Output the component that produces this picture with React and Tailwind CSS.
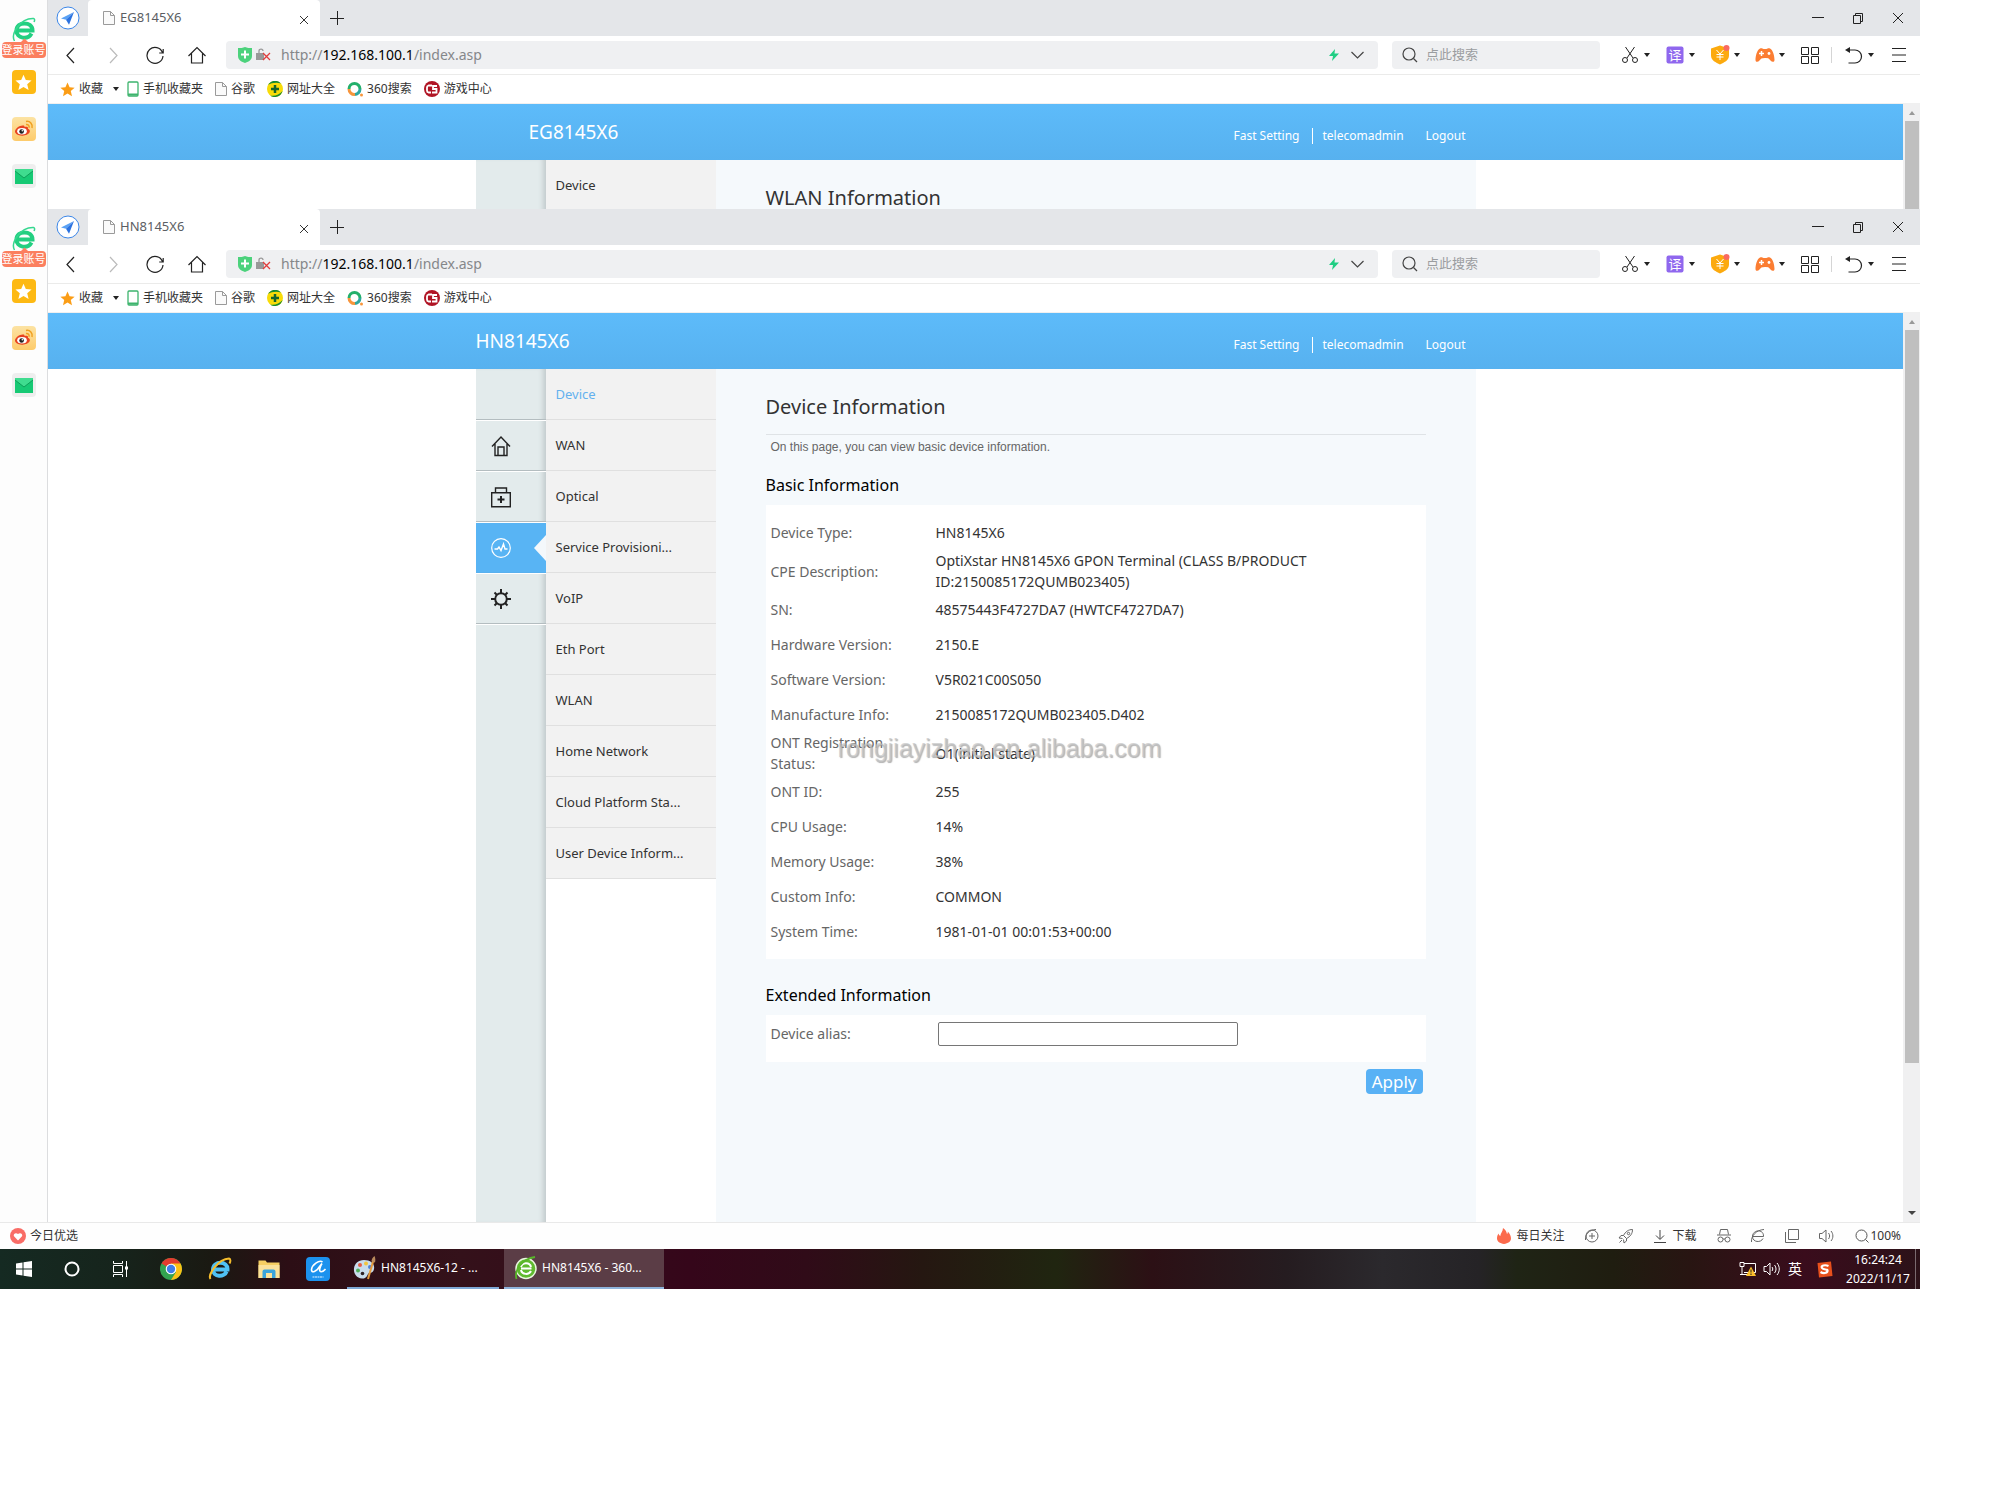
import { useState } from 'react';

/* ---------- small shared bits ---------- */

const Caret = () => (
    <svg width="6" height="4" viewBox="0 0 6 4" className="shrink-0"><path d="M0 0h6L3 4z" fill="#222" /></svg>
);

const FileIcon = () => (
    <svg width="12" height="14" viewBox="0 0 12 14" fill="#fafafa" stroke="#9a9a9a" className="shrink-0">
        <path d="M.5.5h7l4 4v9H.5z" />
        <path d="M7.5.5v4h4" fill="none" />
    </svg>
);

const Star = ({ size, color }) => (
    <svg width={size} height={size} viewBox="0 0 16 16" fill={color} className="shrink-0">
        <path d="M8 .6l2.2 5 5.4.5-4.1 3.6 1.3 5.4L8 12.3l-4.8 2.8 1.3-5.4L.4 6.1l5.4-.5z" />
    </svg>
);

/* ---------- browser side strip ---------- */

function SideStrip() {
    return (
        <aside className="w-12 shrink-0 border-r border-[#dcdddf] bg-[#fdfdfd] flex flex-col items-center pt-4">
            <svg width="24" height="26" viewBox="0 0 24 26" fill="none">
                <path d="M5 14.5h15.5C20.5 5 4.5 5 4.5 14.5c0 8.5 11.5 9.500 15 3" stroke="#22cf80" strokeWidth="4" />
                <path d="M2.5 25C-1.5 18 8 2 21.5 2.5c1.5.3 1.3 2 .5 3.5" stroke="#35d78f" strokeWidth="1.5" />
                <path d="M9 26l3.5-3.5L16 26z" fill="#ff7d5d" />
            </svg>
            <span className="w-11 h-4 rounded-sm bg-[#fb7f5f] text-white text-[11px] leading-4 text-center">登录账号</span>
            <div className="mt-3 flex flex-col gap-[23px]">
                <button aria-label="收藏" className="size-6 rounded bg-[#fdb913] flex items-center justify-center">
                    <Star size={17} color="#fff" />
                </button>
                <button aria-label="微博" className="size-6 rounded bg-gradient-to-b from-[#fce3a3] to-[#fdcb6b] flex items-center justify-center">
                    <svg width="20" height="20" viewBox="0 0 20 20" fill="none">
                        <path d="M8.5 6.5c1.5-.4 2.3.2 2 1.6 2-.7 4-.3 3.5 1.7 4 1.4 1.5 6.7-5.5 6.9C3.5 16.8.8 14.5 1 12.3 1.3 9.5 5.5 6.5 8.5 6.5z" fill="#e8431f" />
                        <ellipse cx="8" cy="12.3" rx="4.8" ry="3.2" fill="#fff" />
                        <circle cx="7.6" cy="12.5" r="2.3" fill="#222" />
                        <circle cx="8.3" cy="11.8" r=".8" fill="#fff" />
                        <path d="M12 5.5c2-.5 3.7 1.2 3 3.3M12 2.5c4-.8 7 2.6 6 6.5" stroke="#f0a020" strokeWidth="1.5" />
                    </svg>
                </button>
                <button aria-label="邮件" className="size-6 rounded bg-[#eeeeee] flex items-center justify-center">
                    <svg width="18" height="15" viewBox="0 0 18 15">
                        <path d="M0 0h18v15H0z" fill="#17c974" />
                        <path d="M0 0h18v2L9 9 0 2z" fill="#3fdc8f" />
                        <path d="M0 2l9 7 9-7" fill="none" stroke="#0e9f59" />
                    </svg>
                </button>
            </div>
        </aside>
    );
}

/* ---------- browser chrome ---------- */

function TabBar({ title }) {
    return (
        <div className="flex h-9 shrink-0 bg-[#e4e6e9]">
            <div className="w-10 flex items-center justify-center">
                <svg width="24" height="24" viewBox="0 0 24 24">
                    <circle cx="12" cy="12" r="11" fill="#fff" stroke="#3b86e8" />
                    <path d="M18 6L5 12.5l5 1.2z" fill="#5aa2f5" />
                    <path d="M18 6l-8 7.7 3 5z" fill="#2b72e0" />
                </svg>
            </div>
            <div className="w-58 rounded-t bg-white flex items-center pl-[15px] pr-[11px]">
                <FileIcon />
                <span className="ml-[5px] flex-1 text-[13px] text-[#5b5e63]">{title}</span>
                <button aria-label="Close tab">
                    <svg width="10" height="10" viewBox="0 0 10 10" stroke="#333" className="mt-1"><path d="M1 1l8 8M9 1L1 9" /></svg>
                </button>
            </div>
            <button aria-label="New tab" className="px-2.5">
                <svg width="14" height="14" viewBox="0 0 14 14" stroke="#222"><path d="M7.5 0v14M0 7.5h14" /></svg>
            </button>
            <div className="ml-auto flex items-center gap-7 pr-4">
                <button aria-label="Minimize"><svg width="12" height="12" viewBox="0 0 12 12" stroke="#222"><path d="M0 5.5h12" /></svg></button>
                <button aria-label="Restore"><svg width="12" height="12" viewBox="0 0 12 12" stroke="#222" fill="none"><path d="M1.5 3.5h7v8h-7zM3.5 3.5v-2h7v8h-2" /></svg></button>
                <button aria-label="Close"><svg width="12" height="12" viewBox="0 0 12 12" stroke="#222"><path d="M1 1l10 10M11 1L1 11" /></svg></button>
            </div>
        </div>
    );
}

const navIcons = [
    { label: 'Back', color: '#222', d: 'M13 3L6 10.5 13 18' },
    { label: 'Forward', color: '#bbb', d: 'M7 3l7 7.5L7 18' },
    { label: 'Reload', color: '#222', d: 'M17.5 7.5A8 8 0 1 0 18 11M18.2 4v4h-4' },
    { label: 'Home', color: '#222', d: 'M1.5 11L10 2.5l8.5 8.5M4.5 8.5v9.5h11V8.5' },
];

const tools = [
    {
        label: '截图',
        icon: (
            <g fill="none" stroke="#222">
                <path d="M5.5 2L13 13M14.5 2L7 13" />
                <circle cx="5" cy="15" r="2.5" />
                <circle cx="15" cy="15" r="2.5" />
            </g>
        ),
    },
    {
        label: '翻译',
        icon: (
            <g>
                <rect x="1.5" y="1.5" width="17" height="17" rx="2" fill="#8f67ee" />
                <text x="10" y="15" fontSize="13" textAnchor="middle" fill="#fff">译</text>
            </g>
        ),
    },
    {
        label: '网银',
        icon: (
            <g>
                <path d="M10 .5l9 3v7c0 5-5 7-9 9-4-2-9-4-9-9v-7z" fill="#fcaa0e" />
                <path d="M6.5 5l3.5 4 3.5-4M10 9v6M6.5 9.5h7M6.5 12h7" fill="none" stroke="#fff" />
                <circle cx="16.5" cy="3" r="3" fill="#f96a62" />
            </g>
        ),
    },
    {
        label: '游戏',
        icon: (
            <g>
                <path d="M5 3.5c2-.8 2.5.5 5 .5s3-1.3 5-.5c3 1 4.5 8 4.5 11.5 0 2.3-2.5 2.5-4 .5-1.2-1.7-2-2.5-5.5-2.5s-4.3.8-5.5 2.5c-1.5 2-4 1.8-4-.5C.5 11.5 2 4.5 5 3.5z" fill="#fb7d32" />
                <path d="M6.5 6v5M4 8.5h5" stroke="#fff" strokeWidth="1.5" />
                <circle cx="14" cy="8.5" r="1.4" fill="#fff" />
            </g>
        ),
    },
];

function AddressRow() {
    return (
        <div className="flex h-[39px] shrink-0 items-center border-b border-[#ebebea] pl-0.5 pr-3">
            {navIcons.map(n => (
                <button key={n.label} aria-label={n.label} className="w-[42px] flex justify-center">
                    <svg width="20" height="20" viewBox="0 0 20 20" fill="none" stroke={n.color} strokeWidth="1.2"><path d={n.d} /></svg>
                </button>
            ))}
            <div className="ml-2 flex h-7 flex-1 items-center rounded bg-[#eff0f2] pl-3 pr-3.5">
                <svg width="14" height="16" viewBox="0 0 14 16">
                    <path d="M7 0c2 1 4.5 1 7 1v8c0 4-4 6-7 7-3-1-7-3-7-7V1c2.5 0 5 0 7-1z" fill="#4cd27c" />
                    <path d="M7 3.5v8M3 7.5h8" stroke="#fff" strokeWidth="2" />
                </svg>
                <svg width="15" height="14" viewBox="0 0 15 14" className="ml-1" fill="none">
                    <path d="M0 5h8v7H0z" fill="#999" />
                    <path d="M3 5V3c0-2.5 4-2.5 4 0" stroke="#999" strokeWidth="1.3" />
                    <path d="M7 5l7 7M14 5l-7 7" stroke="#e23c3c" strokeWidth="1.3" />
                </svg>
                <p className="ml-2.5 flex-1 text-sm leading-7 text-[#85878a]">http://<span className="text-black">192.168.100.1</span>/index.asp</p>
                <svg width="10" height="12" viewBox="0 0 10 12"><path d="M6 0L0 7h4l-1 5 7-7.5H5.5z" fill="#1fce83" /></svg>
                <svg width="13" height="8" viewBox="0 0 13 8" fill="none" stroke="#444" strokeWidth="1.2" className="ml-3"><path d="M.5 1l6 6 6-6" /></svg>
            </div>
            <label className="ml-3.5 flex h-7 w-52 items-center rounded bg-[#eff0f2] pl-2.5">
                <svg width="16" height="16" viewBox="0 0 16 16" fill="none" stroke="#444" strokeWidth="1.2"><circle cx="7" cy="7" r="6" /><path d="M11.5 11.5l3.5 3.5" /></svg>
                <input type="text" aria-label="搜索" placeholder="点此搜索" className="ml-2 w-36 bg-transparent text-[13px] outline-none placeholder:text-[#9b9da0]" />
            </label>
            <div className="ml-5 flex items-center">
                {tools.map(t => (
                    <button key={t.label} aria-label={t.label} className="w-[45px] flex items-center gap-1">
                        <svg width="20" height="20" viewBox="0 0 20 20">{t.icon}</svg>
                        <Caret />
                    </button>
                ))}
                <button aria-label="扩展">
                    <svg width="20" height="20" viewBox="0 0 20 20" fill="none" stroke="#222"><path d="M1.5 2.5h7v7h-7zM11.5 2.5h7v7h-7zM1.5 11.5h7v7h-7zM11.5 11.5h7v7h-7z" /></svg>
                </button>
                <span className="ml-[11px] h-4 border-l border-[#d5d5d5]"></span>
                <button aria-label="撤销" className="ml-3 flex items-center gap-1">
                    <svg width="20" height="20" viewBox="0 0 20 20" fill="none" stroke="#222" strokeWidth="1.2">
                        <path d="M3 5h8a6 6 0 0 1 0 13H4.5" />
                        <path d="M1 5l5-3v6z" fill="#222" stroke="none" />
                    </svg>
                    <Caret />
                </button>
                <button aria-label="菜单" className="ml-4">
                    <svg width="18" height="16" viewBox="0 0 18 16" stroke="#222"><path d="M2 1.5h14M2 8h14M2 14.5h14" /></svg>
                </button>
            </div>
        </div>
    );
}

const bookmarks = [
    { label: '网址大全', icon: <g><circle cx="8" cy="8" r="8" fill="#f8dc08" /><path d="M1 4a8 8 0 0 1 13-1.5C9 1 4.5 2 1 4zM15.5 10A8 8 0 0 1 3 14.5c5 1 9.5-1 12.5-4.5z" fill="#148a35" /><path d="M8 4v8M4 8h8" stroke="#14652c" strokeWidth="2.5" /></g> },
    { label: '360搜索', icon: <g fill="none" strokeWidth="3"><path d="M2 8a5.5 5.5 0 0 1 11 0" stroke="#23b06b" /><path d="M13 8a5.5 5.5 0 0 1-5.5 5.5" stroke="#2fa7a0" /><path d="M2 8a5.5 5.5 0 0 0 6 5.5" stroke="#f7953c" /><circle cx="14.5" cy="14" r="1.5" fill="#f7953c" stroke="none" /></g> },
    { label: '游戏中心', icon: <g fill="none"><circle cx="8" cy="8" r="8" fill="#b01424" /><path d="M8 4.5H4.5a2 2 0 0 0-1.5 2v3a2 2 0 0 0 1.5 2H7M13 5H9v3h3.5v3.5H8" stroke="#fff" strokeWidth="1.8" /></g> },
];

function BookmarkBar() {
    return (
        <nav className="flex h-[29px] shrink-0 items-center gap-3 border-b border-[#f0f0f0] pl-3 text-xs text-[#333]">
            <a href="#fav" className="flex items-center gap-1">
                <Star size={15} color="#fb9d16" />
                收藏
                <span className="ml-1.5"><Caret /></span>
            </a>
            <a href="#mobile" className="flex items-center gap-1 -ml-1">
                <svg width="12" height="16" viewBox="0 0 12 16">
                    <rect x="1" y="1" width="10" height="14" rx="1" fill="#fff" stroke="#3db46d" strokeWidth="1.3" />
                    <path d="M1 12.5h10v2H1z" fill="#3db46d" />
                </svg>
                手机收藏夹
            </a>
            <a href="#google" className="flex items-center gap-1">
                <FileIcon />
                谷歌
            </a>
            {bookmarks.map(b => (
                <a key={b.label} href="#bookmark" className="flex items-center gap-1">
                    <svg width="16" height="16" viewBox="0 0 16 16">{b.icon}</svg>
                    {b.label}
                </a>
            ))}
        </nav>
    );
}

function Scrollbar({ full }) {
    return (
        <div className="w-[17px] shrink-0 bg-[#f0f0f1] flex flex-col items-center">
            <svg width="8" height="17" viewBox="0 0 8 17" className="shrink-0"><path d="M1 11h6L4 7z" fill="#999" /></svg>
            <div className={full ? 'w-3.5 grow-[733] bg-[#bfbfbf]' : 'w-3.5 grow bg-[#bfbfbf]'}></div>
            {full && <div className="grow-[142]"></div>}
            {full && <svg width="8" height="17" viewBox="0 0 8 17" className="shrink-0"><path d="M0 6h8l-4 4z" fill="#444" /></svg>}
        </div>
    );
}

/* ---------- router page ---------- */

function PageHeader({ brand, indent }) {
    return (
        <header className="h-14 shrink-0 bg-gradient-to-b from-[#5dbbfa] to-[#57b1ef] text-white">
            <div className="mx-auto flex h-full w-[1000px] items-center">
                <h1 className={indent ? 'ml-[53px] text-[19px]' : 'text-[19px]'}>{brand}</h1>
                <div className="ml-auto mt-2 mr-2.5 flex items-center text-xs">
                    <a href="#fast">Fast Setting</a>
                    <span className="ml-3 mr-2.5 h-4 border-l border-white"></span>
                    <a href="#user">telecomadmin</a>
                    <a href="#logout" className="ml-[22px]">Logout</a>
                </div>
            </div>
        </header>
    );
}

const sections = [
    { id: 'blank', icon: null },
    { id: 'Home', icon: <path d="M1 11.5L10 2l9 9.5M4 9v11.5h12V9M7 20.500V12h6v8.500" /> },
    { id: 'Setup', icon: <g><path d="M.7 6.7h18.6v14H.7zM4.5 6.7V2h11v4.7" /><path d="M10 10v7M6.5 13.5h7" strokeWidth="2" /></g> },
    { id: 'Service', icon: <g><circle cx="10" cy="11" r="9.3" strokeWidth="1.2" /><path d="M3.5 12h3L8 10l2 3.5L12.500 7 14 12h2.500" strokeWidth="1.4" /></g> },
    { id: 'System', icon: <g strokeWidth="2"><circle cx="10" cy="11" r="5.8" /><path d="M10 1v4M10 17v4M0 11h4M16 11h4M3.5 4.5L6 7M14 15l2.5 2.5M16.5 4.5L14 7M6 15l-2.5 2.5" /></g> },
];

function IconRail({ active, short }) {
    return (
        <div className="w-[70px] shrink-0 bg-[#e3ebec] pt-px shadow-[inset_-6px_0_5px_-3px_#c3cbcd]">
            {!short && sections.map(s => (
                <div key={s.id} className="h-[51px] border-b border-b-white">
                    <button
                        aria-label={s.id}
                        className={s.id === active
                            ? 'relative flex h-full w-full items-center border-b border-[#58b0ee] bg-[#58b4f4] pl-[15px] text-white'
                            : 'flex h-full w-full items-center border-b border-[#b4bdc0] pl-[15px] text-[#222]'}
                    >
                        {s.icon && <svg width="20" height="22" viewBox="0 0 20 22" fill="none" stroke="currentColor" strokeWidth="1.4">{s.icon}</svg>}
                        {s.id === active && (
                            <svg width="12" height="26" viewBox="0 0 12 26" className="absolute right-0 top-3"><path d="M12 0v26L0 13z" fill="#f4f8fb" /></svg>
                        )}
                    </button>
                </div>
            ))}
        </div>
    );
}

const menu = ['Device', 'WAN', 'Optical', 'Service Provisioni...', 'VoIP', 'Eth Port', 'WLAN', 'Home Network', 'Cloud Platform Sta...', 'User Device Inform...'];

function Menu({ items, active }) {
    return (
        <nav className="w-[170px] shrink-0 text-[13px] text-[#333]">
            {items.map(m => (
                <a
                    key={m}
                    href="#menu"
                    className={m === active
                        ? 'block h-[51px] border-b border-[#e0e0e0] bg-[#f2f2f2] pl-2.5 leading-[50px] text-[#64b1ee]'
                        : 'block h-[51px] border-b border-[#e0e0e0] bg-[#f2f2f2] pl-2.5 leading-[50px]'}
                >
                    {m}
                </a>
            ))}
        </nav>
    );
}

const deviceInfo = [
    ['Device Type:', 'HN8145X6'],
    ['CPE Description:', 'OptiXstar HN8145X6 GPON Terminal (CLASS B/PRODUCT ID:2150085172QUMB023405)'],
    ['SN:', '48575443F4727DA7 (HWTCF4727DA7)'],
    ['Hardware Version:', '2150.E'],
    ['Software Version:', 'V5R021C00S050'],
    ['Manufacture Info:', '2150085172QUMB023405.D402'],
    ['ONT Registration Status:', 'O1(initial state)'],
    ['ONT ID:', '255'],
    ['CPU Usage:', '14%'],
    ['Memory Usage:', '38%'],
    ['Custom Info:', 'COMMON'],
    ['System Time:', '1981-01-01 00:01:53+00:00'],
];

function DevicePage() {
    const [alias, setAlias] = useState('');

    return (
        <main className="flex-1 bg-[#f5f9fc] px-[50px] pt-5 pb-32 text-sm text-[#333]">
            <h2 className="h-[46px] border-b border-[#dfe3e6] text-xl leading-[35px]">Device Information</h2>
            <p className="pl-[5px] font-['Liberation_Sans',sans-serif] text-xs leading-[25px] text-[#666]">On this page, you can view basic device information.</p>

            <h3 className="mt-3 text-base leading-[26px] text-black">Basic Information</h3>
            <div className="relative mt-[7px] bg-white py-2.5">
                <table className="w-full leading-[21px]">
                    <tbody>
                        {deviceInfo.map(([label, value]) => (
                            <tr key={label} className="h-[35px]">
                                <th scope="row" className="w-[170px] p-0 pl-[5px] pr-8 text-left font-normal text-[#666]">{label}</th>
                                <td className="p-0">{value}</td>
                            </tr>
                        ))}
                    </tbody>
                </table>
                {/* seller watermark over the table */}
                <p className="pointer-events-none absolute left-[72px] top-[227px] font-['Liberation_Sans',sans-serif] text-[25px] leading-8 text-[#c4c4c4]/70 [text-shadow:1px_1px_1px_#8f8f8fb0]">
                    rongjiayizhao.en.alibaba.com
                </p>
            </div>

            <h3 className="mt-[23px] text-base leading-[26px] text-black">Extended Information</h3>
            <div className="mt-[7px] flex h-[47px] items-start bg-white pl-[5px] pt-[7px]">
                <label htmlFor="alias" className="w-[167px] leading-6 text-[#666]">Device alias:</label>
                <input
                    id="alias"
                    type="text"
                    value={alias}
                    onChange={e => setAlias(e.target.value)}
                    className="h-6 w-[300px] rounded-xs border border-[#767676] bg-white px-1"
                />
            </div>
            <div className="mt-[7px] flex justify-end pr-[3px]">
                <button className="h-[25px] rounded bg-[#58b1f5] px-1.5 text-[17px] leading-[25px] text-white">Apply</button>
            </div>
        </main>
    );
}

function BrowserWindow({ title, indent, short, children }) {
    return (
        <div className={short ? 'flex h-[209px] overflow-hidden' : 'flex'}>
            <SideStrip />
            <div className="flex flex-1 flex-col">
                <TabBar title={title} />
                <AddressRow />
                <BookmarkBar />
                <div className="flex min-h-0 flex-1">
                    <div className="flex flex-1 flex-col">
                        <PageHeader brand={title} indent={indent} />
                        <div className="mx-auto flex w-[1000px] flex-1">{children}</div>
                    </div>
                    <Scrollbar full={!short} />
                </div>
            </div>
        </div>
    );
}

/* ---------- browser status bar ---------- */

const statusIcons = [
    <g><circle cx="8" cy="8" r="6" /><path d="M8 5v6M5 8h6M1.5 12C1 6 5 2 12 1.5" /></g>,
    <g><path d="M14.5 1.5c-4 0-7 2-9 6l3 3c4-2 6-5 6-9zM5.5 7.5H3L1 10l3.5.5M8.5 10.5V13L6 15l-.5-3.5M4 12l-2.500 2.500" /><circle cx="10.5" cy="5.5" r="1.2" /></g>,
];

const statusIcons2 = [
    <g><path d="M3.5 6.5l1-5h7l1 5M1 7h14" /><circle cx="4.5" cy="11.5" r="2.5" /><circle cx="11.5" cy="11.5" r="2.5" /><path d="M7 11h2" /></g>,
    <g><path d="M2.5 8.5h11c.5-8-11-7-11 0 0 6 8.5 6.5 10.5 2M1.5 14C1 8 6 2 14 1.5" /></g>,
    <g><path d="M4.5 1.5h10v10h-10zM1.5 4v10.5H12" /></g>,
    <g><path d="M1.5 5.5H4L8 2v12l-4-3.5H1.5zM10.5 5c1.5 2 1.5 4 0 6M13 3c2.5 3 2.5 7 0 10" /></g>,
];

function StatusBar() {
    return (
        <div className="flex h-[27px] items-center border-t border-[#e9e9e9] bg-[#fefefe] pl-2.5 pr-[19px] text-xs text-[#333]">
            <svg width="16" height="16" viewBox="0 0 16 16">
                <circle cx="8" cy="8" r="8" fill="#f96d67" />
                <path d="M8 12.5L4 8.3C2.8 6.5 5.5 3.8 8 6c2.5-2.2 5.2.5 4 2.3z" fill="#fff" />
            </svg>
            <span className="ml-1">今日优选</span>
            <div className="ml-auto flex items-center gap-[18px]">
                <span className="mr-0.5 flex items-center gap-1">
                    <svg width="16" height="16" viewBox="0 0 16 16"><path d="M7 0c3 2 3.5 4 4 6 .8-.6.8-1.5.8-2.5C14 6 15 8 15 10.5c0 3-3 5-7 5.5-4-.5-7-2.5-7-5.5 0-2 .5-3.5 1.5-5 .3 1 .8 2 1.8 2.5C4.500 5 7 3.500 7 0z" fill="#fb6a4b" /></svg>
                    每日关注
                </span>
                {statusIcons.map((icon, i) => (
                    <svg key={i} width="16" height="16" viewBox="0 0 16 16" fill="none" stroke="#666">{icon}</svg>
                ))}
                <span className="mr-0.5 flex items-center gap-1">
                    <svg width="16" height="16" viewBox="0 0 16 16" fill="none" stroke="#444"><path d="M8 2v9M4 7.5l4 4 4-4M2 14.5h12" /></svg>
                    下载
                </span>
                {statusIcons2.map((icon, i) => (
                    <svg key={i} width="16" height="16" viewBox="0 0 16 16" fill="none" stroke="#666">{icon}</svg>
                ))}
                <span className="ml-0.5 flex items-center">
                    <svg width="16" height="16" viewBox="0 0 16 16" fill="none" stroke="#555"><circle cx="7.5" cy="7.5" r="5.5" /><path d="M11.5 11.5l3 3" /></svg>
                    100%
                </span>
            </div>
        </div>
    );
}

/* ---------- windows taskbar ---------- */

const launchers = [
    { label: 'Start', icon: <path d="M4 6.5l6.5-1v6H4zM11.5 5.3L20 4v7.5h-8.5zM4 12.5h6.5v6l-6.5-1zM11.5 12.5H20V20l-8.5-1.3z" fill="#fff" /> },
    { label: 'Search', icon: <circle cx="12" cy="12" r="6.5" fill="none" stroke="#fff" strokeWidth="2" /> },
    { label: 'Task view', icon: <g fill="none" stroke="#fff"><path d="M5.5 8.5h9v7h-9zM5.5 4v2.5h9V4M5.5 20v-2.5h9V20M18.5 4v16" /><path d="M17 9.5h3v3h-3z" fill="#fff" stroke="none" /></g> },
];

const pinned = [
    { label: 'Chrome', icon: <g><circle cx="12" cy="12" r="11" fill="#32a350" /><path d="M12 12L2.5 6.5A11 11 0 0 1 21.5 6.5z" fill="#e33b2e" /><path d="M12 12V6.5h9.5A11 11 0 0 1 12 23l5-8z" fill="#fbc116" /><circle cx="12" cy="12" r="5.3" fill="#fff" /><circle cx="12" cy="12" r="4.2" fill="#3f7ee8" /></g> },
    { label: 'Internet Explorer', icon: <g fill="none"><path d="M5 12.5h14.5C20 3.5 5 3.5 5 12.5c0 8 11.5 8 13.5 2" stroke="#4fc1f3" strokeWidth="4" /><path d="M2.5 22C-.5 18 10 2 21 1.5c2 .5 1.5 3 .5 5" stroke="#f5bd2c" strokeWidth="2" /></g> },
    { label: 'Explorer', icon: <g><path d="M1.5 3.5h7l1.5 2h12.5V21h-21z" fill="#f6cf62" /><path d="M1.5 8h21v13h-21z" fill="#fbe29a" /><path d="M5.5 21v-6.5a2 2 0 0 1 2-2h9a2 2 0 0 1 2 2V21H15v-5H9v5z" fill="#3aa4dc" /></g> },
    { label: 'AliSupplier', icon: <g><rect width="24" height="24" rx="4" fill="#1c92ee" /><path d="M16.5 5C13 2.5 6 8 5.5 12.5c-.3 4 5 2.5 8.5-3.5l2-2.5c-2 3-3.5 8-1 8.2 1.8.1 3.5-1.5 4.5-2.7" fill="none" stroke="#fff" strokeWidth="1.6" /><path d="M6.5 20h11" stroke="#9fd2fb" strokeWidth="1.5" strokeDasharray="2 .5" /></g> },
];

function Taskbar() {
    return (
        <footer className="flex h-10 items-center bg-[linear-gradient(90deg,#152a22,#16241c_6%,#1a1912_11%,#2c0e15_15%,#34111a_24%,#35061a_36%,#300b18_42%,#251711_48%,#202510_55%,#2c1015_60%,#251c20_67%,#2b292d_72%,#252326_77%,#1f2415_79%,#1f1d10_84%,#281512_88%,#3a0c1c_94%,#2c1218)] text-xs text-white">
            {launchers.map(l => (
                <button key={l.label} aria-label={l.label} className="w-12 flex justify-center">
                    <svg width="24" height="24" viewBox="0 0 24 24">{l.icon}</svg>
                </button>
            ))}
            <div className="ml-0.5 flex">
                {pinned.map(p => (
                    <button key={p.label} aria-label={p.label} className="w-[49px] flex justify-center">
                        <svg width="24" height="24" viewBox="0 0 24 24">{p.icon}</svg>
                    </button>
                ))}
            </div>
            <button className="ml-[5px] flex h-full w-[152px] items-center gap-1 border-b-2 border-[#7fa9d6] pl-1.5">
                <svg width="24" height="24" viewBox="0 0 24 24">
                    <path d="M11 4c7 0 11 4 10 9s-5 3-6 5-2 5-6 4.5C3 22 .5 17 1 12.5S5 4 11 4z" fill="#c9dcec" />
                    <circle cx="7" cy="9" r="2" fill="#e25d48" />
                    <circle cx="13" cy="7.5" r="2" fill="#f2c53d" />
                    <circle cx="5" cy="14.5" r="2" fill="#4fb05a" />
                    <circle cx="17" cy="11" r="2" fill="#4c82d8" />
                    <circle cx="9.5" cy="17.5" r="1.8" fill="#2c2024" />
                    <path d="M20.5 4L15 23" stroke="#e59a3e" strokeWidth="2" />
                    <path d="M18.5 5.5c0-2 1-4 3-5.5 1 2 1 4.5.5 6.5z" fill="#b98a5d" />
                </svg>
                HN8145X6-12 - ...
            </button>
            <button className="ml-[5px] flex h-full w-40 items-center gap-1 border-b-2 border-[#8fb4dc] bg-[#5b3d46] pl-2.5">
                <svg width="24" height="24" viewBox="0 0 24 24" fill="none">
                    <circle cx="12" cy="12.5" r="10" fill="#5fba2f" stroke="#e9f6df" strokeWidth="1.5" />
                    <path d="M7 12.5h10.5M7 11c1-5 9-5 10 0M7 14c1 5 8 5 10 1" stroke="#fff" strokeWidth="2" />
                    <path d="M2.5 23C0 14 8 3 21 1" stroke="#58b52a" strokeWidth="1.8" />
                </svg>
                HN8145X6 - 360...
            </button>
            <div className="ml-auto flex h-full items-center">
                <svg width="18" height="16" viewBox="0 0 18 16" fill="none" stroke="#fff">
                    <path d="M1 1.5h4v4H1zM5 2.5h11.5v9H5M3 5.5V13M1 13.5h7" />
                    <path d="M12 5.5L17 15H7z" fill="#fbc02c" stroke="none" />
                    <path d="M12 8.5v3M12 12.5V14" stroke="#222" />
                </svg>
                <svg width="17" height="16" viewBox="0 0 17 16" fill="none" stroke="#fff" className="ml-1.5"><path d="M1 5.5h2.5L7 2v12l-3.500-3.500H1zM9 6c1 1.200 1 2.800 0 4M11.500 4c2 2.500 2 5.500 0 8M14 2c3 3.500 3 8.500 0 12" /></svg>
                <span className="ml-2 text-sm">英</span>
                <svg width="17" height="17" viewBox="0 0 17 17" className="ml-3.5">
                    <path d="M1.5 2L15 .5 16.5 15 3 16.5z" fill="#e8501c" />
                    <path d="M12.5 5C9 3.5 4.5 4.5 6 7s6 .5 5.5 3-4.5 2.5-7 1" fill="none" stroke="#fff" strokeWidth="2.2" />
                </svg>
                <p className="ml-3 w-[66px] text-center leading-[19px]">16:24:24<br />2022/11/17</p>
                <span className="ml-1 mr-1 h-full border-l border-[#7a6a6e]"></span>
            </div>
        </footer>
    );
}

export default function App() {
    return (
        <div className="min-h-screen bg-white pr-20 font-['Noto_Sans','Noto_Sans_CJK_SC',sans-serif]">
            <BrowserWindow title="EG8145X6" indent short>
                <IconRail short />
                <Menu items={['Device']} />
                <main className="flex-1 bg-[#f5f9fc] px-[50px] pt-5">
                    <h2 className="text-xl leading-[35px] text-[#333]">WLAN Information</h2>
                </main>
            </BrowserWindow>
            <BrowserWindow title="HN8145X6">
                <IconRail active="Service" />
                <Menu items={menu} active="Device" />
                <DevicePage />
            </BrowserWindow>
            <StatusBar />
            <Taskbar />
        </div>
    );
}
